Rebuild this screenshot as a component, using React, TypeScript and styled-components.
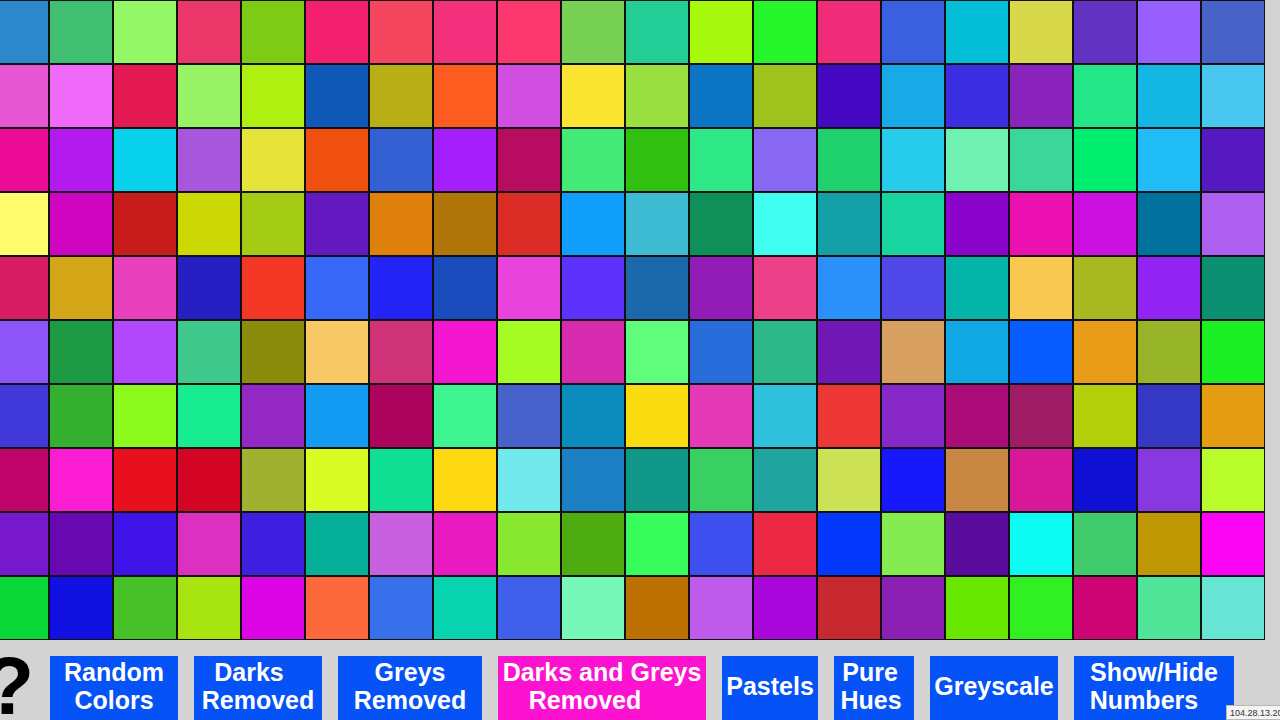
import styled, { createGlobalStyle } from 'styled-components'

const GlobalStyle = createGlobalStyle`
    html, body {
        margin: 0;
        padding: 0;
        width: 1280px;
        height: 720px;
        overflow: hidden;
        background: #d3d3d3;
    }
`

// colour rows as they were generated on screen (20 per row)
const swatches: string[][] = [
    ['#2d87cd', '#40bf70', '#93f766', '#ea3669', '#7dcb14', '#f2206f', '#f4465e', '#f2307c', '#fd386f', '#76d155', '#22cd96', '#a6f90c', '#26f52a', '#ef2b7a', '#3a60e0', '#03c0d8', '#d8d94a', '#6232c1', '#975ffd', '#4862c8'],
    ['#e655d2', '#ef6af8', '#e51a52', '#98f466', '#b0f010', '#1059b8', '#baae16', '#fd5c20', '#d14fe0', '#fce433', '#9ae040', '#0c74c4', '#9fc21c', '#4508c3', '#18aae6', '#3a2ee0', '#8a22bc', '#22e688', '#14b6e4', '#48c8f0'],
    ['#ec0c96', '#b41aee', '#08d2ec', '#a657dc', '#e6e438', '#f05010', '#3460d4', '#a41ffb', '#b80c60', '#44ea76', '#30c010', '#2ee886', '#8868f0', '#1ed16c', '#28cceb', '#6ff2b2', '#3cd69a', '#00ee70', '#20bcf8', '#5618c0'],
    ['#fefc6c', '#d005c2', '#c81c1c', '#ccd804', '#a5cc14', '#6418c0', '#e0800c', '#b0760a', '#dc2c26', '#10a0fc', '#3ebcd4', '#0e9058', '#40fdf0', '#14a0a8', '#18d4a0', '#8c04cc', '#ec10b0', '#cc10e0', '#00709c', '#b060f0'],
    ['#d81c64', '#d4a516', '#e840bd', '#2620c4', '#f43826', '#3868f8', '#2224f5', '#1a4cbe', '#e844dc', '#5e30fc', '#1b68aa', '#921cb8', '#ec4088', '#2b90fa', '#5048e8', '#04b4a8', '#f8c850', '#a8b820', '#9224f4', '#0a9070'],
    ['#8c56f8', '#1f9a44', '#b248fc', '#40c88c', '#8c8c0c', '#f8c864', '#d03478', '#f416d0', '#a4fc24', '#d82cb0', '#60fc7c', '#286cdc', '#2cb888', '#7018b4', '#d8a060', '#10a8e4', '#065cfc', '#e89c18', '#98b428', '#1cf024'],
    ['#4038d8', '#34b030', '#8cfa1c', '#18ec90', '#9428c4', '#149cf4', '#ac045c', '#3cf490', '#4862cc', '#0c8cbc', '#f9dc10', '#e43ab8', '#30c2dc', '#ee3838', '#8828c8', '#ac0c78', '#a01c64', '#b4d00c', '#3438c4', '#e49c10'],
    ['#c0046c', '#fc1cd4', '#e8101c', '#d40424', '#a0b030', '#d8fc24', '#10e094', '#fdd810', '#70e8ec', '#1c80c4', '#109888', '#38d060', '#20a4a0', '#cce254', '#1818fc', '#c88844', '#d81898', '#1010d4', '#8838e0', '#b8fc2c'],
    ['#7818cc', '#6808b0', '#4014e8', '#dc30c0', '#4020e0', '#04b098', '#c860e0', '#e81cc0', '#88e830', '#4cac10', '#38fc5c', '#4050f0', '#ec2844', '#0438fc', '#84ec50', '#5c0c9c', '#0cfcf4', '#40cc6c', '#c09804', '#fc04f4'],
    ['#0ad838', '#1010e0', '#48c028', '#a8e410', '#dc04e4', '#fc683c', '#3870ec', '#08d4b0', '#4060ec', '#78f8b8', '#bc7000', '#c05cec', '#a808dc', '#c82830', '#8c20b4', '#68e800', '#30f024', '#cc0474', '#50e498', '#68e4d4'],
]

type Line = { text: string; shift?: number }
type Control = { lines: Line[]; width: number; active?: boolean }

const controls: Control[] = [
    { lines: [{ text: 'Random' }, { text: 'Colors' }], width: 128 },
    { lines: [{ text: 'Darks', shift: 18 }, { text: 'Removed' }], width: 128 },
    { lines: [{ text: 'Greys' }, { text: 'Removed' }], width: 144 },
    { lines: [{ text: 'Darks and Greys' }, { text: 'Removed', shift: 34 }], width: 208, active: true },
    { lines: [{ text: 'Pastels' }], width: 96 },
    { lines: [{ text: 'Pure', shift: 8 }, { text: 'Hues', shift: 6 }], width: 80 },
    { lines: [{ text: 'Greyscale' }], width: 128 },
    { lines: [{ text: 'Show/Hide' }, { text: 'Numbers', shift: 20 }], width: 160 },
]

const Page = styled.div`
    position: relative;
    width: 1280px;
    height: 720px;
    overflow: hidden;
    background: #d3d3d3;
    display: flex;
    flex-direction: column;
    font-family: 'Liberation Sans', Arial, sans-serif;
`

const Grid = styled.div`
    display: grid;
    grid-template-columns: repeat(20, 64px);
    grid-auto-rows: 64px;
    width: 1280px;
    margin-left: -15px;
    flex-shrink: 0;
`

const Swatch = styled.div<{ $color: string }>`
    box-sizing: border-box;
    border: 1px solid #111;
    background: ${({ $color }) => $color};
`

const Toolbar = styled.div`
    display: flex;
    align-items: flex-start;
    gap: 16px;
    margin-top: 16px;
    height: 64px;
`

const Help = styled.div`
    width: 34px;
    margin-top: -11px;
    font-size: 82px;
    line-height: 1;
    font-weight: bold;
    color: #000;
    text-align: right;
    overflow: visible;
    white-space: nowrap;
    direction: rtl;
`

const Button = styled.button<{ $width: number; $active?: boolean }>`
    box-sizing: border-box;
    width: ${({ $width }) => $width}px;
    height: 64px;
    padding: 0 0 4px;
    margin: 0;
    border: none;
    background: ${({ $active }) => ($active ? '#fc12cf' : '#0552f7')};
    color: #fff;
    font-family: 'Liberation Sans', Arial, sans-serif;
    font-size: 25px;
    font-weight: bold;
    line-height: 28px;
    display: flex;
    flex-direction: column;
    justify-content: center;
    align-items: stretch;
    text-align: center;
    white-space: nowrap;
`

const ButtonLine = styled.span<{ $shift: number }>`
    display: block;
    padding-right: ${({ $shift }) => $shift}px;
`

const HostTag = styled.div`
    position: absolute;
    left: 1226px;
    top: 705px;
    width: 60px;
    height: 15px;
    box-sizing: border-box;
    padding: 2px 0 0 3px;
    background: #f4f4f4;
    border: 1px solid #b8b8b8;
    font-family: 'Liberation Sans', Arial, sans-serif;
    font-size: 9px;
    line-height: 10px;
    color: #333;
    white-space: nowrap;
    overflow: hidden;
`

export default function App() {
    return (
        <>
            <GlobalStyle />
            <Page>
                <Grid>
                    {swatches.flatMap((row, r) =>
                        row.map((color, c) => <Swatch key={`${r}-${c}`} $color={color} />)
                    )}
                </Grid>
                <Toolbar>
                    <Help>?</Help>
                    {controls.map((control) => (
                        <Button
                            key={control.lines.map((l) => l.text).join(' ')}
                            $width={control.width}
                            $active={control.active}
                        >
                            {control.lines.map((line) => (
                                <ButtonLine key={line.text} $shift={line.shift ?? 0}>
                                    {line.text}
                                </ButtonLine>
                            ))}
                        </Button>
                    ))}
                </Toolbar>
                <HostTag>104.28.13.200</HostTag>
            </Page>
        </>
    )
}
